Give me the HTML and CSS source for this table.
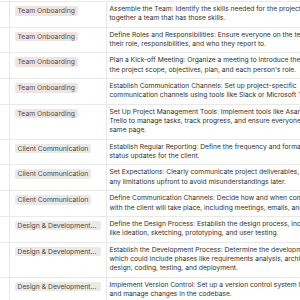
FILE: index.html
```html
<!DOCTYPE html>
<html lang="en">
<head>
    <meta charset="UTF-8">
    <meta name="viewport" content="width=device-width, initial-scale=1.0">
    <title>Project Plan</title>
    <link rel="stylesheet" href="styles.css">
</head>
<body>
<table class="plan">
    <colgroup>
        <col class="col-gap">
        <col class="col-phase">
        <col class="col-task">
    </colgroup>
    <tbody>
    <tr>
        <td></td>
        <td><span class="tag brown">Team Onboarding</span></td>
        <td>Assemble the Team: Identify the skills needed for the project and put<br>together a team that has those skills.</td>
    </tr>
    <tr>
        <td></td>
        <td><span class="tag brown">Team Onboarding</span></td>
        <td>Define Roles and Responsibilities: Ensure everyone on the team knows<br>their role, responsibilities, and who they report to.</td>
    </tr>
    <tr>
        <td></td>
        <td><span class="tag brown">Team Onboarding</span></td>
        <td>Plan a Kick-off Meeting: Organize a meeting to introduce the team and<br>the project scope, objectives, plan, and each person's role.</td>
    </tr>
    <tr>
        <td></td>
        <td><span class="tag brown">Team Onboarding</span></td>
        <td>Establish Communication Channels: Set up project-specific<br>communication channels using tools like Slack or Microsoft Teams.</td>
    </tr>
    <tr>
        <td></td>
        <td><span class="tag brown">Team Onboarding</span></td>
        <td>Set Up Project Management Tools: Implement tools like Asana, Jira, or<br>Trello to manage tasks, track progress, and ensure everyone is on the<br>same page.</td>
    </tr>
    <tr>
        <td></td>
        <td><span class="tag grey">Client Communication</span></td>
        <td>Establish Regular Reporting: Define the frequency and format of the<br>status updates for the client.</td>
    </tr>
    <tr>
        <td></td>
        <td><span class="tag grey">Client Communication</span></td>
        <td>Set Expectations: Clearly communicate project deliverables, costs, and<br>any limitations upfront to avoid misunderstandings later.</td>
    </tr>
    <tr>
        <td></td>
        <td><span class="tag grey">Client Communication</span></td>
        <td>Define Communication Channels: Decide how and when communication<br>with the client will take place, including meetings, emails, and calls.</td>
    </tr>
    <tr>
        <td></td>
        <td><span class="tag grey">Design &amp; Development Process</span></td>
        <td>Define the Design Process: Establish the design process, including steps<br>like ideation, sketching, prototyping, and user testing.</td>
    </tr>
    <tr>
        <td></td>
        <td><span class="tag grey">Design &amp; Development Process</span></td>
        <td>Establish the Development Process: Determine the development plan,<br>which could include phases like requirements analysis, architecture,<br>design, coding, testing, and deployment.</td>
    </tr>
    <tr>
        <td></td>
        <td><span class="tag grey">Design &amp; Development Process</span></td>
        <td>Implement Version Control: Set up a version control system like Git<br>and manage changes in the codebase.</td>
    </tr>
    </tbody>
</table>
</body>
</html>
```

FILE: styles.css
```css
html, body {
    margin: 0;
    padding: 0;
    background: #fff;
    overflow: hidden;
}
body {
    font-family: Inter, "Noto Sans", sans-serif;
    font-size: 6.7px;
    line-height: 9.35px;
    color: #32302b;
    padding-top: 1px;
}
.plan {
    border-collapse: collapse;
    table-layout: fixed;
    width: 420px;
}
.col-gap {
    width: 9px;
}
.col-phase {
    width: 97px;
}
.col-task {
    width: 314px;
}
.plan td {
    border: 1px solid #e9e9e7;
    padding: 3px;
    vertical-align: top;
}
.plan tr td:first-child {
    border-left: none;
}
.plan td:nth-child(2) {
    padding-left: 5px;
    padding-right: 5px;
}
.plan td:nth-child(3) {
    white-space: nowrap;
}
.tag {
    display: inline-block;
    max-width: 100%;
    box-sizing: border-box;
    padding: 0 3px;
    margin-top: 1px;
    border-radius: 2px;
    font-size: 6.8px;
    white-space: nowrap;
    overflow: hidden;
    text-overflow: ellipsis;
    vertical-align: top;
    line-height: 9.5px;
}
.brown {
    background-color: #f1e4e0;
    color: #5b4a44;
}
.grey {
    background-color: #e9e9e7;
    color: #4a4945;
}
```
